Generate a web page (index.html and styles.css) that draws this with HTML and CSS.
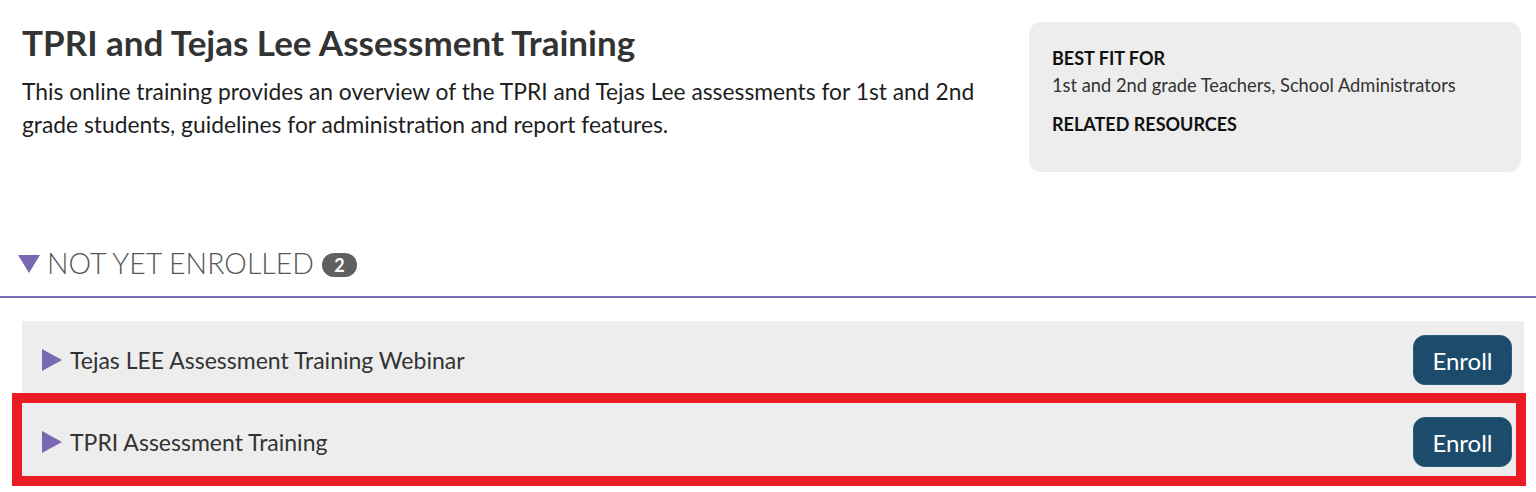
FILE: index.html
```html
<!DOCTYPE html>
<html lang="en">
<head>
<meta charset="utf-8">
<title>TPRI and Tejas Lee Assessment Training</title>
<link rel="stylesheet" href="styles.css">
</head>
<body>
<div class="page">
  <section class="intro">
    <div class="intro-main">
      <h1 class="title">TPRI and Tejas Lee Assessment Training</h1>
      <p class="desc">This online training provides an overview of the TPRI and Tejas Lee assessments for 1st and 2nd grade students, guidelines for administration and report features.</p>
    </div>
    <aside class="sidebar">
      <h3 class="side-head">BEST FIT FOR</h3>
      <p class="side-text">1st and 2nd grade Teachers, School Administrators</p>
      <h3 class="side-head side-head-2">RELATED RESOURCES</h3>
    </aside>
  </section>

  <section class="group">
    <div class="group-head">
      <span class="tri-down"></span>
      <span class="group-title">NOT YET ENROLLED</span>
      <span class="badge">2</span>
    </div>
    <div class="rows">
      <div class="row">
        <span class="tri-right"></span>
        <span class="row-title">Tejas LEE Assessment Training Webinar</span>
        <button class="enroll">Enroll</button>
      </div>
      <div class="row">
        <span class="tri-right"></span>
        <span class="row-title">TPRI Assessment Training</span>
        <button class="enroll">Enroll</button>
      </div>
      <div class="highlight"></div>
    </div>
  </section>
</div>
</body>
</html>
```
FILE: styles.css
```css
html, body {
  margin: 0;
  padding: 0;
  background: #ffffff;
}
body {
  font-family: Lato, "Open Sans", "Liberation Sans", sans-serif;
  color: #333333;
}
.page {
  width: 1536px;
  height: 492px;
  overflow: hidden;
}
.intro {
  display: flex;
  justify-content: space-between;
  align-items: flex-start;
  padding: 0 15px 0 22px;
}
.intro-main {
  width: 980px;
}
.title {
  margin: 22px 0 0 0;
  font-size: 35px;
  line-height: 40px;
  font-weight: 700;
  color: #333333;
}
.desc {
  margin: 13px 0 0 0;
  font-size: 22.8px;
  line-height: 33px;
  color: #1e1e1e;
}
.sidebar {
  margin-top: 22px;
  width: 492px;
  height: 150px;
  box-sizing: border-box;
  background: #ededed;
  border-radius: 12px;
  padding: 25px 20px 0 23px;
}
.side-head {
  margin: 0;
  font-size: 18px;
  line-height: 22px;
  font-weight: 700;
  color: #111111;
}
.side-text {
  margin: 5px 0 0 0;
  font-size: 18.3px;
  line-height: 22px;
  color: #333333;
}
.side-head-2 {
  margin-top: 17px;
}
.group {
  margin-top: 79px;
}
.group-head {
  display: flex;
  align-items: center;
  padding: 0 0 21px 18px;
  border-bottom: 2px solid #7d6db6;
  height: 24px;
}
.tri-down {
  width: 0;
  height: 0;
  border-left: 11px solid transparent;
  border-right: 11px solid transparent;
  border-top: 18px solid #7a68b3;
  margin-right: 7px;
  margin-top: 2px;
}
.group-title {
  font-size: 28.5px;
  font-weight: 300;
  color: #555555;
  line-height: 30px;
}
.badge {
  margin-left: 8px;
  margin-top: 3px;
  width: 35px;
  height: 24px;
  border-radius: 12px;
  background: #606060;
  color: #ffffff;
  font-size: 18px;
  font-weight: 700;
  line-height: 24px;
  text-align: center;
}
.rows {
  position: relative;
  display: flex;
  flex-direction: column;
  gap: 4px;
  padding: 23px 12px 0 22px;
}
.row {
  display: flex;
  align-items: center;
  height: 78px;
  background: #ededed;
  padding: 0 12px 0 20px;
}
.tri-right {
  width: 0;
  height: 0;
  border-top: 11px solid transparent;
  border-bottom: 11px solid transparent;
  border-left: 20px solid #7a68b3;
  margin-right: 8px;
}
.row-title {
  flex: 1;
  font-size: 23px;
  color: #333333;
}
.enroll {
  width: 99px;
  height: 50px;
  border: 1px solid #2a5a7c;
  border-radius: 12px;
  background: #1d4b6c;
  color: #ffffff;
  font-family: Lato, "Open Sans", sans-serif;
  font-size: 24px;
  padding: 0;
}
.highlight {
  position: absolute;
  left: 12px;
  top: 95px;
  width: 1514px;
  height: 93px;
  box-sizing: border-box;
  border: 10px solid #ec1c24;
  pointer-events: none;
}
```
